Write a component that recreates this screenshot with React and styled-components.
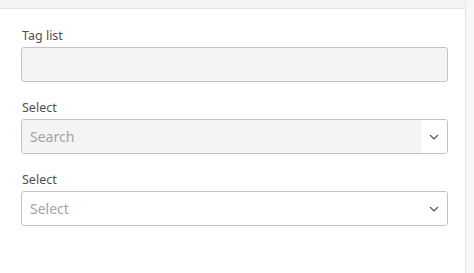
import React from 'react';
import styled, { createGlobalStyle } from 'styled-components';

const Global = createGlobalStyle`
  body {
    margin: 0;
    background: #fff;
    font-family: "Noto Sans", "Open Sans", sans-serif;
  }
`;

const Page = styled.div`
  display: flex;
  height: 273px;
`;

const Panel = styled.div`
  width: 465px;
  border-right: 1px solid #e6e6e6;
  display: flex;
  flex-direction: column;
`;

const Strip = styled.div`
  flex: 1;
  background: #f7f7f7;
`;

const TopBar = styled.div`
  height: 8px;
  background: #f4f4f4;
  border-bottom: 1px solid #e2e2e2;
`;

const Form = styled.div`
  padding: 19px 0 0 21px;
  width: 427px;
  display: flex;
  flex-direction: column;
  gap: 18px;
`;

const Field = styled.div`
  display: flex;
  flex-direction: column;
  gap: 3px;
`;

const Label = styled.label`
  font-size: 12.5px;
  line-height: 16px;
  color: #4f4f4f;
  padding-left: 1px;
`;

const Box = styled.div`
  height: 33px;
  border: 1px solid #c2c2c2;
  border-radius: 3px;
  background: ${p => (p.$filled ? '#f4f4f5' : '#fff')};
  display: flex;
  align-items: center;
  overflow: hidden;
`;

const Text = styled.span`
  flex: 1;
  padding-left: 8px;
  font-size: 14px;
  color: #a3a3a3;
  align-self: stretch;
  display: flex;
  align-items: center;
  background: ${p => (p.$filled ? '#f4f4f5' : 'transparent')};
`;

const Caret = styled.span`
  width: 26px;
  align-self: stretch;
  display: flex;
  align-items: center;
  justify-content: center;
  background: #fff;
  color: #555;
`;

const Chevron = () => (
  <svg width="10" height="6" viewBox="0 0 10 6" fill="none">
    <path d="M1 1l4 4 4-4" stroke="#555" strokeWidth="1.2" />
  </svg>
);

export default function App() {
  return (
    <Page>
      <Global />
      <Panel>
        <TopBar />
        <Form>
          <Field>
            <Label>Tag list</Label>
            <Box $filled />
          </Field>
          <Field>
            <Label>Select</Label>
            <Box>
              <Text $filled>Search</Text>
              <Caret><Chevron /></Caret>
            </Box>
          </Field>
          <Field>
            <Label>Select</Label>
            <Box>
              <Text>Select</Text>
              <Caret><Chevron /></Caret>
            </Box>
          </Field>
        </Form>
      </Panel>
      <Strip />
    </Page>
  );
}
